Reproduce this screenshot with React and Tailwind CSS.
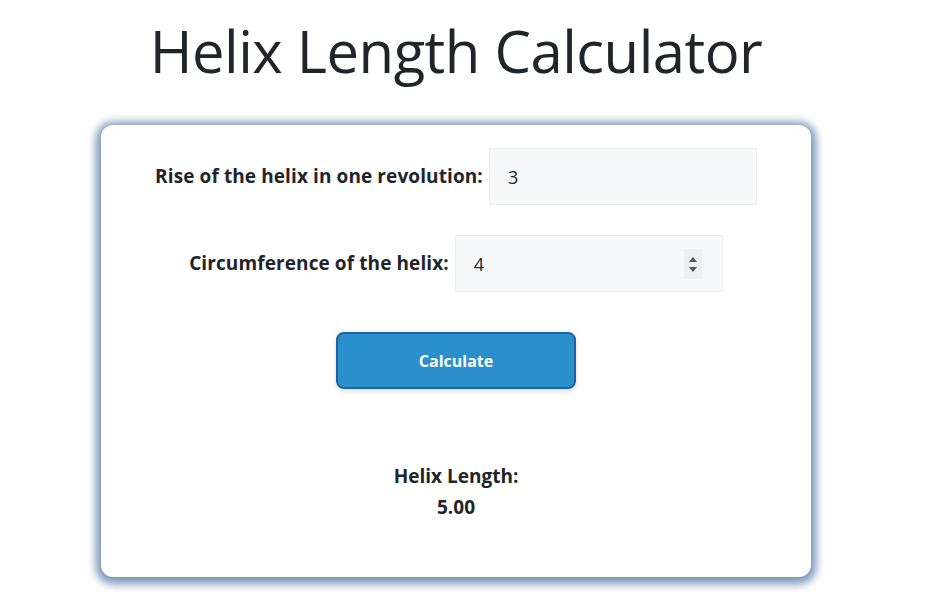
import { useState } from "react";

export default function App() {
  const [rise, setRise] = useState("3");
  const [circ, setCirc] = useState("4");
  const [result, setResult] = useState("5.00");

  const calcular = () => {
    const r = parseFloat(rise);
    const c = parseFloat(circ);
    if (isNaN(r) || isNaN(c)) return;
    setResult(Math.sqrt(r * r + c * c).toFixed(2));
  };

  return (
    <div className="min-h-screen bg-white text-[#212529]" style={{ fontFamily: '"Open Sans", "Noto Sans", sans-serif' }}>
      <div className="w-[912px]">
        <h1 className="text-center text-[58px] leading-none font-normal pt-[22px] tracking-[-0.5px]">Helix Length Calculator</h1>

        <div className="mx-auto mt-[45px] w-[710px] h-[452px] rounded-[12px] bg-white shadow-[0_2px_9px_5px_rgba(95,130,172,0.85)] pt-[23px]">
          <div className="flex justify-center items-center gap-[6px]">
            <label className="font-bold text-[19px] tracking-[0.1px]">Rise of the helix in one revolution:</label>
            <input
              className="w-[268px] h-[57px] bg-[#f7f8fa] border border-[#eceef0] px-[18px] text-[18px] outline-none"
              value={rise}
              onChange={e => setRise(e.target.value)}
            />
          </div>

          <div className="flex justify-center items-center gap-[6px] mt-[30px]">
            <label className="font-bold text-[19px] tracking-[0.1px]">Circumference of the helix:</label>
            <div className="relative w-[268px] h-[57px] bg-[#f7f8fa] border border-[#eceef0]">
              <input
                className="w-full h-full bg-transparent px-[18px] text-[18px] outline-none"
                value={circ}
                onChange={e => setCirc(e.target.value)}
              />
              <div className="absolute right-[20px] top-[13px] w-[18px] h-[30px] bg-[#eeeff1] flex flex-col items-center justify-center gap-[5px]">
                <svg width="8" height="5" viewBox="0 0 8 5"><path d="M0 5 L4 0 L8 5 Z" fill="#555" /></svg>
                <svg width="8" height="5" viewBox="0 0 8 5"><path d="M0 0 L4 5 L8 0 Z" fill="#555" /></svg>
              </div>
            </div>
          </div>

          <div className="flex justify-center mt-[40px]">
            <button
              onClick={calcular}
              className="w-[240px] h-[57px] rounded-[8px] bg-[#2a8fca] border-2 border-[#1b63a3] text-white font-bold text-[16px] shadow-[0_2px_6px_rgba(0,0,0,0.15)]"
            >
              Calculate
            </button>
          </div>

          <div className="text-center font-bold text-[19px] leading-[31px] mt-[72px]">
            <div>Helix Length:</div>
            <div>{result}</div>
          </div>
        </div>
      </div>
    </div>
  );
}
